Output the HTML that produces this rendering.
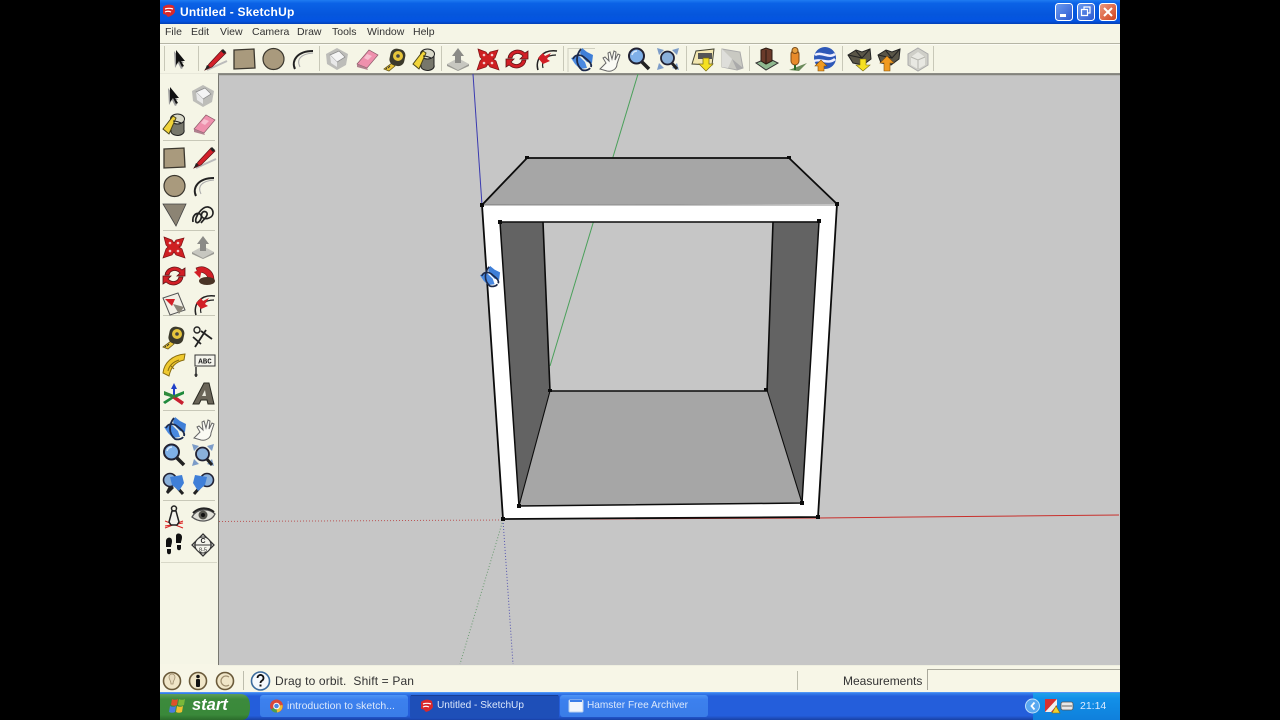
<!DOCTYPE html>
<html><head><meta charset="utf-8"><title>Untitled - SketchUp</title>
<style>
html,body{margin:0;padding:0;background:#000;width:1280px;height:720px;overflow:hidden}
.t{position:absolute;font-family:"Liberation Sans",sans-serif;white-space:nowrap;line-height:1}
svg{position:absolute;left:0;top:0}
</style></head><body>
<svg width="1280" height="720" viewBox="0 0 1280 720" style="z-index:1;filter:blur(.35px)">
<defs>
<linearGradient id="tb" x1="0" y1="0" x2="0" y2="1"><stop offset="0" stop-color="#1f7cf2"/><stop offset=".14" stop-color="#0b62e6"/><stop offset=".6" stop-color="#0556dc"/><stop offset=".88" stop-color="#0454e2"/><stop offset="1" stop-color="#0340b4"/></linearGradient>
<linearGradient id="tk" x1="0" y1="0" x2="0" y2="1"><stop offset="0" stop-color="#3f8cf3"/><stop offset=".15" stop-color="#245edb"/><stop offset=".85" stop-color="#245edb"/><stop offset="1" stop-color="#1941a5"/></linearGradient>
<linearGradient id="st" x1="0" y1="0" x2="0" y2="1"><stop offset="0" stop-color="#5d9d5a"/><stop offset=".2" stop-color="#3c8a3c"/><stop offset=".8" stop-color="#3a893a"/><stop offset="1" stop-color="#2b6b2b"/></linearGradient>
<linearGradient id="tray" x1="0" y1="0" x2="0" y2="1"><stop offset="0" stop-color="#1fa0ea"/><stop offset=".2" stop-color="#1290e8"/><stop offset="1" stop-color="#0f80dc"/></linearGradient>
<linearGradient id="btn" x1="0" y1="0" x2="0" y2="1"><stop offset="0" stop-color="#4d94f5"/><stop offset=".2" stop-color="#3c80ee"/><stop offset="1" stop-color="#3a7de8"/></linearGradient>
<linearGradient id="wb" x1="0" y1="0" x2="1" y2="1"><stop offset="0" stop-color="#6d9cf0"/><stop offset="1" stop-color="#2a58d0"/></linearGradient>
<linearGradient id="wr" x1="0" y1="0" x2="1" y2="1"><stop offset="0" stop-color="#ee9a80"/><stop offset="1" stop-color="#d0401c"/></linearGradient>

<symbol id="sel" viewBox="0 0 24 24" overflow="visible"><path d="M9 20l3-5 3 6 2-1-3-5h4L8 3z" fill="#9a9a9a" transform="translate(-2 1)"/><path d="M8 3v15l3-4 3 6 2-1-3-5h4z" fill="#111"/></symbol>
<symbol id="pen" viewBox="0 0 24 24" overflow="visible"><path d="M4 23L24 14" stroke="#bbb" stroke-width="2" fill="none"/><path d="M2 23l4-6L19 3l4 3L9 20z" fill="#d3202a" stroke="#5b1216" stroke-width=".7"/><path d="M2 23l2-5 3 2z" fill="#222"/><path d="M18 4l3 3 2-2-3-3z" fill="#222"/></symbol>
<symbol id="rec" viewBox="0 0 24 24" overflow="visible"><path d="M2 3l20-1 1 19-21 1z" fill="#a99a7d" stroke="#3b372e" stroke-width="1.3"/></symbol>
<symbol id="cir" viewBox="0 0 24 24" overflow="visible"><circle cx="12.500" cy="12" r="10.500" fill="#a99a7d" stroke="#3b372e" stroke-width="1.200"/></symbol>
<symbol id="arc" viewBox="0 0 24 24" overflow="visible"><path d="M4 22C0 14 6 4 22 4" fill="none" stroke="#222" stroke-width="2"/><path d="M9 20C5 12 10 7 22 6" fill="none" stroke="#aaa" stroke-width="1"/></symbol>
<symbol id="com" viewBox="0 0 24 24" overflow="visible"><path d="M12 1l11 6-2 11-9 5-10-6L1 7z" fill="#bdbdb9"/><path d="M5 8l9-4 6 6-8 5z" fill="#f4f4f4" stroke="#888" stroke-width=".7"/><path d="M5 8l7 7v5l-6-4z" fill="#e8e8e8"/></symbol>
<symbol id="era" viewBox="0 0 24 24" overflow="visible"><path d="M2 17L14 3l9 5L12 21z" fill="#ef90ad" stroke="#8a5a68" stroke-width=".7"/><path d="M2 17l10 4 1 2-11-3z" fill="#b0808e"/><path d="M12 7l5 2-4 4-4-2z" fill="#f7c0d0"/></symbol>
<symbol id="tap" viewBox="0 0 24 24" overflow="visible"><path d="M1 22l8-6 3 3-6 5z" fill="#e8c438" stroke="#6a5a18" stroke-width=".8"/><path d="M5 21l2-2M3 22l1-1" stroke="#333"/><rect x="7" y="2" width="15" height="17" rx="6" fill="#3c3a2c" transform="rotate(12 15 10)"/><circle cx="15" cy="9" r="5" fill="#e6c53c"/><circle cx="15" cy="9" r="1.800" fill="#444"/></symbol>
<symbol id="pai" viewBox="0 0 24 24" overflow="visible"><path d="M9 6h13v12a6 4 0 0 1-13 2z" fill="#77776b" stroke="#222"/><ellipse cx="15.500" cy="7" rx="7" ry="5" fill="#d8d8c8" stroke="#222"/><path d="M1 17L11 4l3 2L7 22z" fill="#f1d43a" stroke="#4a4418"/><path d="M11 9c3 0 6 1 8 2" stroke="#222" fill="none"/></symbol>
<symbol id="pus" viewBox="0 0 24 24" overflow="visible"><path d="M1 17l11-6 11 6-11 6z" fill="#c7c7c0"/><path d="M1 17v2l11 5 11-5v-2l-11 6z" fill="#9a9a94"/><path d="M12 1l-6 8h3v7h6V9h3z" fill="#8b8b87"/></symbol>
<symbol id="mov" viewBox="0 0 24 24" overflow="visible"><path d="M2 2l8 3 2 3 2-3 8-2-3 8-2 1 3 2 3 9-9-3-2-3-2 3-9 3 3-9 2-2-2-2z" fill="#cf1f22" stroke="#7c1115" stroke-width=".7"/><circle cx="8" cy="8" r="1.300" fill="#f3c8c8"/><circle cx="16" cy="8" r="1.300" fill="#f3c8c8"/><circle cx="8" cy="16" r="1.300" fill="#f3c8c8"/><circle cx="16" cy="16" r="1.300" fill="#f3c8c8"/></symbol>
<symbol id="rot" viewBox="0 0 24 24" overflow="visible"><path d="M3 11C4 4 13 0 20 6l3-2v8h-8l3-3C14 5 8 6 7 11z" fill="#d21f26" stroke="#5c1215" stroke-width=".8"/><path d="M21 13c-1 7-10 11-17 5l-3 2v-8h8l-3 3c4 4 10 3 11-2z" fill="#d21f26" stroke="#5c1215" stroke-width=".8"/></symbol>
<symbol id="off" viewBox="0 0 24 24" overflow="visible"><path d="M4 23C1 13 8 2 23 4" fill="none" stroke="#222" stroke-width="1.600"/><path d="M9 21C7 14 12 8 22 8" fill="none" stroke="#222" stroke-width="1.200"/><path d="M4 11l5-5 2 3 6-3-4 6 3 2-7 3z" fill="#d21f26"/></symbol>
<symbol id="orb" viewBox="0 0 24 24" overflow="visible"><path d="M12 1l5 4 6 3-1 8-5-1-4-4-3-5z" fill="#3f7fd8"/><path d="M1 11l8-2 6 6 2 6-7 1-5-5z" fill="#4a89e0"/><path d="M3 12c2-5 8-5 12-1 5 4 7 6 6 9" fill="none" stroke="#1c2a4c" stroke-width="1.800"/><path d="M11 2C6 8 5 17 12 23c3 1 7 0 8-2" fill="none" stroke="#1c2a4c" stroke-width="1.800"/></symbol>
<symbol id="han" viewBox="0 0 24 24" overflow="visible"><path d="M2 22l6-6-3-5 2-1 4 4-1-8 2-1 2 7 2-8 2 1-1 8 3-6 2 1-3 9c0 5-5 8-10 7z" fill="#fafaf4" stroke="#666" stroke-width="1"/></symbol>
<symbol id="zoo" viewBox="0 0 24 24" overflow="visible"><path d="M14 14l8 8" stroke="#222" stroke-width="3.500"/><circle cx="9.500" cy="9" r="7.500" fill="#7fb0e8" stroke="#223" stroke-width="2"/><path d="M5 8a5 5 0 0 1 5-4" stroke="#d6e8fa" stroke-width="1.500" fill="none"/></symbol>
<symbol id="ext" viewBox="0 0 24 24" overflow="visible"><path d="M1 1l7 2-5 5zM23 1l-7 2 5 5zM1 23l2-7 5 5zM23 23l-2-7-5 5z" fill="#7c9cc8"/><path d="M15 15l6 7" stroke="#222" stroke-width="3"/><circle cx="11.500" cy="11" r="6.500" fill="#8ab0da" stroke="#223" stroke-width="1.800"/></symbol>
<symbol id="mapa" viewBox="0 0 24 24" overflow="visible"><path d="M1 17L5 4l18-2-2 16z" fill="#f2e6b0" stroke="#443" stroke-width="1"/><path d="M7 6h14v6H7z" fill="#555"/><path d="M12 11h6v6h4l-7 7-7-7h4z" fill="#f5e020" stroke="#776a10" stroke-width=".7"/></symbol>
<symbol id="ter" viewBox="0 0 24 24" overflow="visible"><path d="M2 2l18 3 3 16-6 2-15-3z" fill="#c9c9c2" stroke="#aaa"/><path d="M2 2l10 10-4 9-6-1z" fill="#dededa"/><path d="M12 12l11 9-6 2z" fill="#aaa"/></symbol>
<symbol id="wh" viewBox="0 0 24 24" overflow="visible"><path d="M1 16l12-5 10 5-12 7z" fill="#8fb88f" stroke="#333"/><path d="M6 3l5-2 6 2v11l-6 3-5-3z" fill="#6a3a2a" stroke="#2a1a12"/><path d="M11 3v14" stroke="#2a1a12"/></symbol>
<symbol id="pin" viewBox="0 0 24 24" overflow="visible"><path d="M5 23l18-7-8 8z" fill="#6a8a5a"/><rect x="7" y="3" width="8" height="15" rx="4" fill="#e88a2a" stroke="#7a4a18"/><circle cx="11" cy="3.500" r="3" fill="#e8a040" stroke="#7a4a18"/><path d="M11 18v5" stroke="#2a6a2a" stroke-width="2"/></symbol>
<symbol id="ear" viewBox="0 0 24 24" overflow="visible"><circle cx="13" cy="11" r="11" fill="#2e58b8"/><path d="M3 8c6-4 14 4 20-1M2 14c7-3 14 4 21-2" stroke="#eef" stroke-width="2.500" fill="none"/><path d="M9 13l-6 6h3v5h6v-5h3z" fill="#f09a20" stroke="#805010" stroke-width=".6"/></symbol>
<symbol id="dn" viewBox="0 0 24 24" overflow="visible"><path d="M0 8l8-5 6 2 8-3 1 10-8 6-10-2z" fill="#5a5648" stroke="#222"/><path d="M8 4l6 7 8-9M0 8l14 3" stroke="#222" fill="none"/><path d="M12 12h6v6h4l-7 6-7-6h4z" fill="#f5e020" stroke="#776a10" stroke-width=".6"/></symbol>
<symbol id="up" viewBox="0 0 24 24" overflow="visible"><path d="M2 8l8-5 6 2 8-3-1 10-8 6-10-2z" fill="#5a5648" stroke="#222"/><path d="M10 4l6 7 8-9M2 8l14 3" stroke="#222" fill="none"/><path d="M8 24v-8H4l7-7 7 7h-4v8z" fill="#f09a20" stroke="#805010" stroke-width=".6"/></symbol>
<symbol id="sha" viewBox="0 0 24 24" overflow="visible"><path d="M12 1l10 6v11l-10 6-10-6V7z" fill="#cfcfc8" stroke="#aaa"/><path d="M5 10l7-5 7 5v8l-7 4-7-4z" fill="#e8e8e2"/><path d="M12 13v9M5 10l7 3 7-3" stroke="#b5b5ae" fill="none"/></symbol>
<symbol id="tri" viewBox="0 0 24 24" overflow="visible"><path d="M1 3h23L14 25z" fill="#8c8474" stroke="#444" stroke-width=".8"/></symbol>
<symbol id="fre" viewBox="0 0 24 24" overflow="visible"><path d="M2 20c-1-6 3-10 7-8 4 3-2 11-4 8-2-4 6-16 12-15 6 1 7 9 1 11-5 2-9-1-7-5 2-3 6-1 5 2-1 3-4 5-6 8" fill="none" stroke="#222" stroke-width="1.700"/></symbol>
<symbol id="rotp" viewBox="0 0 24 24" overflow="visible"><path d="M4 5c8-4 18 2 18 12h-6C16 11 10 8 6 10z" fill="#d21f26" stroke="#5c1215" stroke-width=".6"/><ellipse cx="15" cy="18" rx="8" ry="4" fill="#4a3426"/><path d="M2 9l8-3-2 9z" fill="#d21f26"/></symbol>
<symbol id="fol" viewBox="0 0 24 24" overflow="visible"><path d="M1 6l15-5 7 17-15 5z" fill="#f2f0e6" stroke="#555"/><path d="M11 12l11 3-5 7z" fill="#8a8578"/><path d="M3 7l7 7 3-7z" fill="#d21f26"/></symbol>
<symbol id="pro" viewBox="0 0 24 24" overflow="visible"><path d="M1 20C2 10 10 2 23 1l-1 6C13 9 9 14 7 23z" fill="#efc92f" stroke="#8a6e10"/><path d="M6 18c1-5 5-9 11-11M12 16l-3-3" stroke="#8a6e10" fill="none"/></symbol>
<symbol id="dim" viewBox="0 0 24 24" overflow="visible"><path d="M4 22L15 5M10 6l11 8M2 12l8 7" stroke="#222" stroke-width="1.800" fill="none"/><circle cx="6" cy="5" r="3" fill="none" stroke="#222" stroke-width="1.400"/></symbol>
<symbol id="txt" viewBox="0 0 24 24" overflow="visible"><path d="M4 14v10" stroke="#333" stroke-width="1.500"/><circle cx="4" cy="22" r="1.500" fill="#333"/><rect x="3" y="2" width="20" height="11" fill="#f4f4ec" stroke="#333"/><text x="13" y="10.500" text-anchor="middle" font-family="Liberation Mono,monospace" font-weight="bold" font-size="7.500" fill="#222">ABC</text></symbol>
<symbol id="axs" viewBox="0 0 24 24" overflow="visible"><path d="M12 1l-3 6h2v8l2 0V7h2z" fill="#2040c8"/><path d="M12 13L1 20l2 2 9-6z" fill="#1f8a3c"/><path d="M12 13l10 7-2 3-10-7z" fill="#c82030"/><path d="M12 13L2 9v4l10 3z" fill="#2f8a3c"/><path d="M12 13l10-4v3l-9 4z" fill="#1f8a3c"/></symbol>
<symbol id="a3" viewBox="0 0 24 24" overflow="visible"><path d="M1 22L12 1h5l5 21h-6l-1-4H9l-2 4z" fill="#6a6558" stroke="#2a2a22"/><path d="M10 14h4l-1-6z" fill="#e8e8dc"/></symbol>
<symbol id="zw" viewBox="0 0 24 24" overflow="visible"><path d="M8 12l4 4-6 6-2-2z" fill="#222"/><path d="M14 14l7 8" stroke="#222" stroke-width="3"/><circle cx="8" cy="8" r="6.500" fill="#8ab0da" stroke="#223" stroke-width="1.600"/><path d="M8 5l12-2 2 8-5 8-7-6z" fill="#3f7fd8"/></symbol>
<symbol id="zn" viewBox="0 0 24 24" overflow="visible"><path d="M10 14l-7 8" stroke="#222" stroke-width="3"/><circle cx="16" cy="8" r="6.500" fill="#8ab0da" stroke="#223" stroke-width="1.600"/><path d="M16 5L4 3 2 11l5 8 7-6z" fill="#3f7fd8"/></symbol>
<symbol id="wlk" viewBox="0 0 24 24" overflow="visible"><path d="M3 21l18-3M3 16l18 7M21 16L3 23" stroke="#d22" stroke-width="1"/><circle cx="12" cy="3.500" r="2.500" fill="none" stroke="#222" stroke-width="1.500"/><path d="M10 6l-3 11 2 3h6l2-3-3-11z" fill="#f4f4ec" stroke="#222" stroke-width="1.500"/></symbol>
<symbol id="eye" viewBox="0 0 24 24" overflow="visible"><path d="M1 12C6 3 18 3 24 9c-3 7-14 10-23 3z" fill="#e0e0d8" stroke="#555" stroke-width="1.300"/><path d="M2 8C8 2 17 2 23 7" stroke="#222" stroke-width="2" fill="none"/><circle cx="12" cy="10" r="4.500" fill="#55554e"/><circle cx="12" cy="10" r="2" fill="#111"/></symbol>
<symbol id="ste" viewBox="0 0 24 24" overflow="visible"><path d="M4 8c0-4 6-5 6 0 0 3-1 4-1 6H4c0-2 0-3 0-6zM5 16h4v3c0 3-4 3-4 0z" fill="#111"/><path d="M14 3c0-4 6-3 6 1 0 3-1 4-1 6h-5c0-2 0-4 0-7zM15 12h4v3c0 3-4 3-4 0z" fill="#111"/></symbol>
<symbol id="pos" viewBox="0 0 24 24" overflow="visible"><path d="M12 1l11 11-11 11L1 12z" fill="#f4f4ec" stroke="#333" stroke-width="1.300"/><circle cx="12" cy="12" r="8" fill="#f4f4ec" stroke="#333" stroke-width="1.100"/><path d="M3 12h18" stroke="#333"/><text x="12" y="10" text-anchor="middle" font-family="Liberation Sans,sans-serif" font-weight="bold" font-size="7" fill="#222">C</text><text x="12" y="18.500" text-anchor="middle" font-family="Liberation Sans,sans-serif" font-size="5.500" fill="#222">8-5</text></symbol>
<symbol id="skp" viewBox="0 0 14 14" overflow="visible"><path d="M1 3c3-3 8-3 11-1l1 5c0 3-4 5-7 6-1-1-2-3-5-3z" fill="#d8282c"/><path d="M3 5c3-1 5-1 8 0M3 8c2-1 4-1 6 0" stroke="#fff" stroke-width="1.200" fill="none"/></symbol>
</defs>

<!-- background areas -->
<rect x="160" y="0" width="960" height="720" fill="#f5f5e6"/>
<rect x="160" y="0" width="960" height="24" fill="url(#tb)"/>
<path d="M160 43.500h960" stroke="#b5b5a5"/>
<path d="M160 44.500h960" stroke="#fbfbf3"/>
<path d="M160 73.500h960" stroke="#8f8f88" stroke-width="1"/>

<!-- canvas -->
<rect x="218" y="74" width="902" height="592" fill="#c6c6c6"/>
<path d="M218.500 74v592" stroke="#77776f"/>
<path d="M218 74.500h902" stroke="#83837c" stroke-width="1.500"/>
<path d="M160 73.500h58" stroke="#e8e8da"/>

<!-- axes -->
<path d="M473 74l9 131" stroke="#3a3ab0" fill="none"/>
<path d="M638 74L550 366" stroke="#4aa05a" fill="none"/>
<path d="M818 518l301-3" stroke="#c8302c" fill="none"/>
<path d="M590 519l228-1" stroke="#c8302c" fill="none"/>
<path d="M219 521.500L503 520" stroke="#b55" fill="none" stroke-dasharray="1 2"/>
<path d="M503 520L460 664" stroke="#6a9a70" fill="none" stroke-dasharray="1 2"/>
<path d="M503 520L513 664" stroke="#5555b0" fill="none" stroke-dasharray="1 2"/>

<!-- cube -->
<path d="M482 205L527 158H789L837 204z" fill="#a6a6a6"/>
<path d="M500 222H543L550 391 519 506z" fill="#636363"/>
<path d="M773 222H819L802 503 767 390z" fill="#636363"/>
<path d="M550 391H767L802 503 519 506z" fill="#a6a6a6"/>
<path fill-rule="evenodd" d="M482 205L837 204 818 517 503 519zM500 222L519 506 802 503 819 221z" fill="#fff"/>
<g fill="none" stroke="#0c0c0c" stroke-width="1.800">
<path d="M482 205L527 158H789L837 204"/>
<path d="M482 205L503 519 818 517 837 204"/>
<path d="M500 222H819L802 503 519 506z" stroke-width="1.500"/>
<path d="M543 222L550 391H767L773 222" stroke-width="1.600"/>
<path d="M550 391L519 506M767 390L802 503" stroke-width="1.100"/>
<path d="M482 205H837" stroke="#666" stroke-width=".7"/>
</g>
<g fill="#0c0c0c"><rect x="480" y="203" width="4" height="4"/><rect x="835" y="202" width="4" height="4"/><rect x="525" y="156" width="4" height="3"/><rect x="787" y="156" width="4" height="3"/><rect x="501" y="517" width="4" height="4"/><rect x="816" y="515" width="4" height="4"/><rect x="498" y="220" width="4" height="4"/><rect x="817" y="219" width="4" height="4"/><rect x="517" y="504" width="4" height="4"/><rect x="800" y="501" width="4" height="4"/><rect x="548" y="389" width="4" height="3"/><rect x="764" y="388" width="4" height="3"/></g>
<use href="#orb" x="479" y="265" width="22" height="22"/>

<!-- top toolbar separators -->
<path d="M164.500 46v25M198.500 46v25M319.500 46v25M441.500 46v25M563.500 46v25M686.500 46v25M749.500 46v25M842.500 46v25M933.500 46v25" stroke="#c8c8b8" fill="none"/>
<path d="M568 72V48.500h27" stroke="#d0d0c0" fill="none"/>

<!-- top toolbar icons -->
<use href="#sel" x="168" y="47" width="24" height="24"/>
<use href="#pen" x="203" y="47" width="24" height="24"/>
<use href="#rec" x="232" y="47" width="24" height="24"/>
<use href="#cir" x="261" y="47" width="24" height="24"/>
<use href="#arc" x="291" y="47" width="24" height="24"/>
<use href="#com" x="325" y="47" width="24" height="24"/>
<use href="#era" x="355" y="47" width="24" height="24"/>
<use href="#tap" x="383" y="47" width="24" height="24"/>
<use href="#pai" x="412" y="47" width="24" height="24"/>
<use href="#pus" x="446" y="47" width="24" height="24"/>
<use href="#mov" x="476" y="47" width="24" height="24"/>
<use href="#rot" x="505" y="47" width="24" height="24"/>
<use href="#off" x="534" y="47" width="24" height="24"/>
<use href="#orb" x="570" y="47" width="24" height="24"/>
<use href="#han" x="598" y="47" width="24" height="24"/>
<use href="#zoo" x="627" y="47" width="24" height="24"/>
<use href="#ext" x="656" y="47" width="24" height="24"/>
<use href="#mapa" x="691" y="47" width="24" height="24"/>
<use href="#ter" x="720" y="47" width="24" height="24"/>
<use href="#wh" x="755" y="47" width="24" height="24"/>
<use href="#pin" x="784" y="47" width="24" height="24"/>
<use href="#ear" x="812" y="47" width="24" height="24"/>
<use href="#dn" x="848" y="47" width="24" height="24"/>
<use href="#up" x="876" y="47" width="24" height="24"/>
<use href="#sha" x="906" y="47" width="24" height="24"/>

<!-- left toolbar separators -->
<path d="M163 140.500h52M163 230.500h52M163 315.500h52M163 410.500h52M163 500.500h52" stroke="#c8c8b8" fill="none"/>
<path d="M161 562.500h56" stroke="#d8d8c8" fill="none"/>
<!-- left toolbar icons -->
<use href="#sel" x="162" y="84" width="24" height="24"/>
<use href="#com" x="191" y="84" width="24" height="24"/>
<use href="#pai" x="162" y="112" width="24" height="24"/>
<use href="#era" x="192" y="112" width="24" height="24"/>
<use href="#rec" x="162" y="146" width="24" height="24"/>
<use href="#pen" x="192" y="145" width="24" height="24"/>
<use href="#cir" x="162" y="174" width="24" height="24"/>
<use href="#arc" x="192" y="174" width="24" height="24"/>
<use href="#tri" x="162" y="201" width="24" height="24"/>
<use href="#fre" x="191" y="202" width="24" height="24"/>
<use href="#mov" x="162" y="235" width="24" height="24"/>
<use href="#pus" x="191" y="235" width="24" height="24"/>
<use href="#rot" x="162" y="264" width="24" height="24"/>
<use href="#rotp" x="192" y="263" width="24" height="24"/>
<use href="#fol" x="162" y="292" width="24" height="24"/>
<use href="#off" x="192" y="292" width="24" height="24"/>
<use href="#tap" x="162" y="325" width="24" height="24"/>
<use href="#dim" x="191" y="325" width="24" height="24"/>
<use href="#pro" x="162" y="353" width="24" height="24"/>
<use href="#txt" x="192" y="353" width="24" height="24"/>
<use href="#axs" x="162" y="382" width="24" height="24"/>
<use href="#a3" x="192" y="382" width="24" height="24"/>
<use href="#orb" x="163" y="416" width="24" height="24"/>
<use href="#han" x="192" y="416" width="24" height="24"/>
<use href="#zoo" x="162" y="443" width="24" height="24"/>
<use href="#ext" x="191" y="443" width="24" height="24"/>
<use href="#zw" x="162" y="472" width="24" height="24"/>
<use href="#zn" x="191" y="472" width="24" height="24"/>
<use href="#wlk" x="162" y="505" width="24" height="24"/>
<use href="#eye" x="191" y="505" width="24" height="24"/>
<use href="#ste" x="162" y="533" width="24" height="24"/>
<use href="#pos" x="191" y="533" width="24" height="24"/>

<!-- title bar -->
<use href="#skp" x="162" y="4" width="14" height="14"/>
<rect x="1055.500" y="3.500" width="17" height="17" rx="3" fill="url(#wb)" stroke="#fff"/>
<rect x="1060" y="14" width="6" height="3" fill="#fff"/>
<rect x="1077.500" y="3.500" width="17" height="17" rx="3" fill="url(#wb)" stroke="#fff"/>
<path d="M1084 9V7h6v6h-2M1081.500 9.500h6v6h-6z" fill="none" stroke="#fff" stroke-width="1.200"/>
<rect x="1099.500" y="3.500" width="17" height="17" rx="3" fill="url(#wr)" stroke="#fff"/>
<path d="M1104 8l8 8M1112 8l-8 8" stroke="#fff" stroke-width="2"/>

<!-- status bar -->
<rect x="160" y="665" width="960" height="27" fill="#f7f6e7"/>
<rect x="160" y="664" width="58" height="2" fill="#f7f6e7"/>
<path d="M218 665.500h902" stroke="#efefe0"/>
<circle cx="172" cy="681" r="8.500" fill="#f0e6c8" stroke="#6a5a3a" stroke-width="1.600"/>
<path d="M169 677a3 3 0 0 1 6 0c0 3-2 3-2 7h-2c0-4-2-4-2-7z" fill="#e8dcc0" stroke="#a09070" stroke-width=".8"/>
<circle cx="198" cy="681" r="8.500" fill="#f0e6c8" stroke="#6a5a3a" stroke-width="1.600"/>
<circle cx="198" cy="676.500" r="1.800" fill="#111"/><rect x="196" y="679" width="4" height="8" rx="1" fill="#111"/>
<circle cx="225" cy="681" r="8.500" fill="#f0e6c8" stroke="#6a5a3a" stroke-width="1.600"/>
<path d="M229 677a5 5 0 1 0 0 8" fill="none" stroke="#a09070" stroke-width="1.300"/>
<path d="M243.500 671v19M797.500 671v19" stroke="#bdbdad"/>
<circle cx="260.500" cy="681" r="9" fill="#f4f8fc" stroke="#3a6a9c" stroke-width="1.600"/>
<path d="M257.500 678a3 3 0 1 1 4.500 2.600c-1.200.7-1.500 1.400-1.500 2.400" fill="none" stroke="#111" stroke-width="1.800"/>
<rect x="259.500" y="684.500" width="2" height="2" fill="#111"/>
<path d="M927.500 690V669.500H1120" stroke="#aaa99c" fill="none"/>

<!-- taskbar -->
<rect x="160" y="692" width="960" height="28" fill="url(#tk)"/>
<path d="M160 692.500h960" stroke="#4f95f5"/>
<path d="M160 694h80c8 0 10 6 10 13s-2 13-8 13h-82z" fill="url(#st)"/>
<g transform="translate(170 698)"><path d="M2 1c2 1 4 1 6 0l-1 6c-2 1-4 1-6 0z" fill="#e0502a"/><path d="M9 1c2 1 4 1 6 0l-1 6c-2 1-4 1-6 0z" fill="#7ab83a"/><path d="M0 8c2 1 4 1 6 0l-1 6c-2 1-4 1-6 0z" fill="#4a7ce0"/><path d="M7 8c2 1 4 1 6 0l-1 6c-2 1-4 1-6 0z" fill="#f0c030"/></g>
<rect x="260" y="695" width="148" height="22" rx="3" fill="url(#btn)"/>
<rect x="410" y="695" width="149" height="23" rx="2" fill="#1e4fb8"/>
<path d="M411 695.500h147" stroke="#173f96"/>
<rect x="560" y="695" width="148" height="22" rx="3" fill="url(#btn)"/>
<circle cx="276.500" cy="706" r="6.500" fill="#d8483a"/>
<path d="M276.500 706L271 709.500a6.500 6.500 0 0 0 6 3z" fill="#4aa050"/>
<path d="M276.500 706l6 -1a6.500 6.500 0 0 1-5.500 7.500z" fill="#e8c038"/>
<circle cx="276.500" cy="706" r="2.800" fill="#4a88e0" stroke="#fff" stroke-width="1"/>
<use href="#skp" x="420" y="699" width="14" height="14"/>
<rect x="569" y="700" width="14" height="12" rx="1" fill="#f2f6fc" stroke="#b8d0f0"/>
<rect x="570" y="700" width="12" height="2" fill="#3a7de8"/>
<rect x="1033" y="693" width="87" height="27" fill="url(#tray)"/>
<circle cx="1032.500" cy="706" r="7" fill="#5aa8f0" stroke="#c0e0fa" stroke-width="1"/>
<path d="M1034.500 702.500l-3 3.500 3 3.500" stroke="#fff" stroke-width="1.800" fill="none"/>
<rect x="1045" y="699" width="12" height="13" fill="#d83030"/>
<path d="M1045 712l12-13v6l-6 7z" fill="#f0f0f0"/>
<path d="M1052 713l4-7 4 7z" fill="#f0d030" stroke="#806810" stroke-width=".6"/>
<rect x="1061" y="702" width="12" height="8" rx="2" fill="#e8e8e8" stroke="#555" stroke-width=".8"/>
<path d="M1062 706h10" stroke="#666"/>
</svg>

<div style="position:absolute;inset:0;z-index:2">
<div class="t" style="left:180px;top:6px;font-size:12px;font-weight:bold;color:#fff;letter-spacing:.2px">Untitled - SketchUp</div>
<div class="t" style="left:165px;top:27px;font-size:10.500px;color:#333">File</div>
<div class="t" style="left:191px;top:27px;font-size:10.500px;color:#333">Edit</div>
<div class="t" style="left:220px;top:27px;font-size:10.500px;color:#333">View</div>
<div class="t" style="left:252px;top:27px;font-size:10.500px;color:#333">Camera</div>
<div class="t" style="left:297px;top:27px;font-size:10.500px;color:#333">Draw</div>
<div class="t" style="left:332px;top:27px;font-size:10.500px;color:#333">Tools</div>
<div class="t" style="left:367px;top:27px;font-size:10.500px;color:#333">Window</div>
<div class="t" style="left:413px;top:27px;font-size:10.500px;color:#333">Help</div>

<div class="t" style="left:275px;top:675px;font-size:12px;color:#333;white-space:pre;letter-spacing:.15px">Drag to orbit.  Shift = Pan</div>
<div class="t" style="left:843px;top:675px;font-size:12px;color:#333">Measurements</div>

<div class="t" style="left:192px;top:697px;font-size:16.500px;font-weight:bold;font-style:italic;color:#fff">start</div>
<div class="t" style="left:287px;top:701px;font-size:10.500px;color:#dce8fb">introduction to sketch...</div>
<div class="t" style="left:437px;top:701px;font-size:10.100px;color:#dce8fb">Untitled - SketchUp</div>
<div class="t" style="left:587px;top:701px;font-size:10.100px;color:#dce8fb">Hamster Free Archiver</div>
<div class="t" style="left:1080px;top:701px;font-size:10.500px;color:#dcecff">21:14</div>

<div style="position:absolute;left:1120px;top:0;width:160px;height:720px;background:#000"></div>
<div style="position:absolute;left:0;top:0;width:160px;height:720px;background:#000"></div>
</div>
</body></html>
